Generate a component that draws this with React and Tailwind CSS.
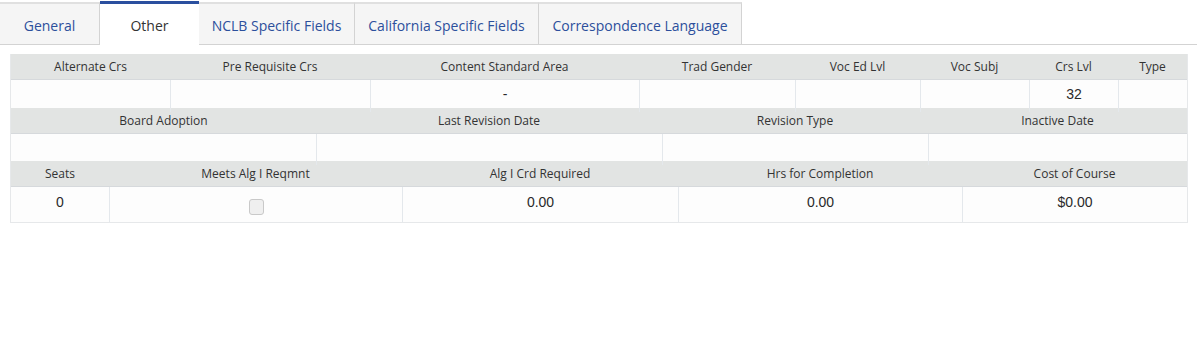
const TABS = [
  { label: 'General', w: 'w-[100px]' },
  { label: 'Other', w: 'w-[99px]', active: true },
  { label: 'NCLB Specific Fields', w: 'w-[156px]' },
  { label: 'California Specific Fields', w: 'w-[184px]' },
  { label: 'Correspondence Language', w: 'w-[203px]' },
];

const ROWS = [
  {
    h: 'h-[28px]',
    cells: [
      ['Alternate Crs', '', 'w-[159px]'],
      ['Pre Requisite Crs', '', 'w-[200px]'],
      ['Content Standard Area', '-', 'w-[269px]'],
      ['Trad Gender', '', 'w-[156px]'],
      ['Voc Ed Lvl', '', 'w-[125px]'],
      ['Voc Subj', '', 'w-[109px]'],
      ['Crs Lvl', '32', 'w-[89px]'],
      ['Type', '', 'flex-1'],
    ],
  },
  {
    h: 'h-[27px]',
    cells: [
      ['Board Adoption', '', 'w-[305px]'],
      ['Last Revision Date', '', 'w-[346px]'],
      ['Revision Type', '', 'w-[266px]'],
      ['Inactive Date', '', 'flex-1'],
    ],
  },
  {
    h: 'h-[35px] pb-[4px]',
    cells: [
      ['Seats', '0', 'w-[98px]'],
      ['Meets Alg I Reqmnt', 'checkbox', 'w-[293px]'],
      ['Alg I Crd Required', '0.00', 'w-[276px]'],
      ['Hrs for Completion', '0.00', 'w-[284px]'],
      ['Cost of Course', '$0.00', 'flex-1'],
    ],
  },
];

function Tabs() {
  return (
    <div className="flex h-[45px] border-b border-[#d3d3d3] pt-[1px]">
      {TABS.map((t) =>
        t.active ? (
          <div
            key={t.label}
            className={`${t.w} -mb-px flex items-center justify-center border-t-[3px] border-[#2a4f9f] bg-white pt-[2px] text-[14px] text-[#333]`}
          >
            {t.label}
          </div>
        ) : (
          <div
            key={t.label}
            className={`${t.w} mt-[1px] flex items-center justify-center border-t-2 border-r border-[#e0e0e0] border-r-[#d3d3d3] bg-[#f5f5f5] pt-[2px] text-[14px] text-[#2c4f9c]`}
          >
            {t.label}
          </div>
        )
      )}
      <div className="flex-1" />
    </div>
  );
}

function Checkbox() {
  return <span className="mt-[4px] block h-[16px] w-[15px] rounded-[3px] border border-[#c9c9c9] bg-[#efefef]" />;
}

function FieldGroup({ row }) {
  return (
    <div>
      <div className="flex h-[26px] border-b border-[#d6d9dc] bg-[#e2e4e3]">
        {row.cells.map(([label, , w]) => (
          <div key={label} className={`${w} flex items-center justify-center text-[12px] text-[#333]`}>
            {label}
          </div>
        ))}
      </div>
      <div className={`flex ${row.h} bg-[#fdfdfd]`}>
        {row.cells.map(([label, value, w], i) => (
          <div
            key={label}
            className={`${w} -mb-[4px] flex items-center justify-center border-[#e4e8ec] ${i > 0 ? 'border-l' : ''} text-[14px] text-[#2a2a2a] [font-family:'Liberation_Sans',Arial,sans-serif]`}
          >
            {value === 'checkbox' ? <Checkbox /> : <span className="-mt-[4px]">{value}</span>}
          </div>
        ))}
      </div>
    </div>
  );
}

export default function App() {
  return (
    <div className="h-[341px] w-[1197px] bg-white [font-family:'Open_Sans','Noto_Sans',sans-serif]">
      <Tabs />
      <div className="mx-[10px] mt-[9px] w-[1178px] border-x border-b border-[#e6e8ea]">
        {ROWS.map((row, i) => (
          <FieldGroup key={i} row={row} />
        ))}
      </div>
    </div>
  );
}
